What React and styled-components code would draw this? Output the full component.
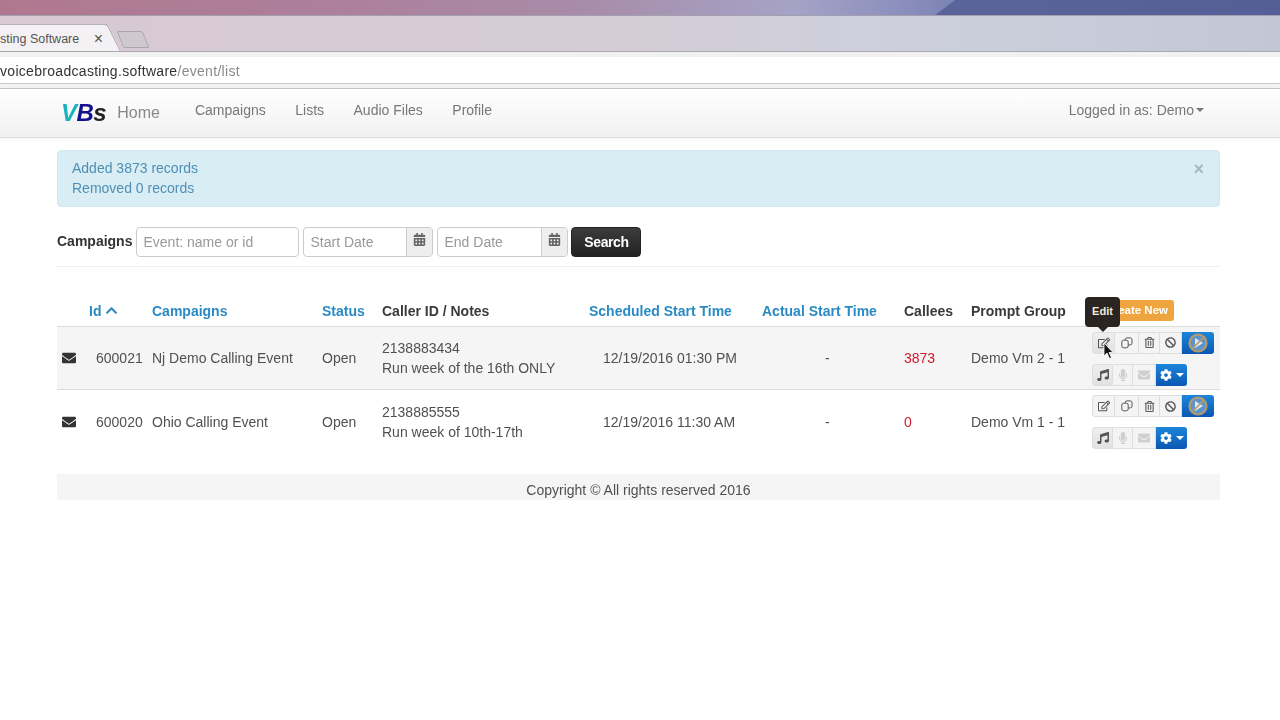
import React from "react";
import styled, { createGlobalStyle } from "styled-components";
import {
  FaBan,
  FaCalendarAlt,
  FaChevronUp,
  FaCog,
  FaEnvelope,
  FaMicrophone,
  FaMusic,
  FaRegEdit,
  FaRegTrashAlt,
} from "react-icons/fa";

const GlobalStyle = createGlobalStyle`
  html, body {
    margin: 0;
    padding: 0;
    height: 100%;
    background: #fff;
    overflow: hidden;
  }
  body {
    font-family: "Liberation Sans", Arial, sans-serif;
    font-size: 14px;
    color: #505050;
  }
`;

const Screen = styled.div`
  width: 1280px;
  height: 720px;
  overflow: hidden;
  position: relative;
  filter: blur(0.5px);
`;

const Desktop = styled.div`
  height: 16px;
  position: relative;
  background: linear-gradient(
    90deg,
    #b0788f 0%,
    #ad7f9b 25%,
    #a88ba8 45%,
    #a5a3c6 62%,
    #8d90bd 70%,
    #7d85b6 74%,
    #7d85b6 100%
  );
  border-bottom: 1px solid #a39fae;
  box-sizing: border-box;

  &::after {
    content: "";
    position: absolute;
    inset: 0;
    background: linear-gradient(90deg, #6a74a6 0%, #535f96 100%);
    clip-path: polygon(935px 100%, 955px 0, 100% 0, 100% 100%);
  }
`;

const TabStrip = styled.div`
  height: 36px;
  display: flex;
  align-items: flex-end;
  background: linear-gradient(90deg, #d8c9d3 0%, #d5ccd6 45%, #cdd0dc 70%, #c3c6d5 100%);
  border-bottom: 1px solid #a9a8ae;
  box-sizing: border-box;
`;

const Tab = styled.div`
  width: 107px;
  height: 27px;
  box-sizing: border-box;
  padding-top: 2px;
  display: flex;
  align-items: center;
  justify-content: space-between;
  position: relative;
  background: #f3f1f3;
  border-top: 1px solid #b5b1b6;
  font-size: 12.5px;
  color: #555;
  white-space: nowrap;

  &::after {
    content: "";
    position: absolute;
    top: -1px;
    right: -7px;
    bottom: 0;
    width: 14px;
    background: #f3f1f3;
    border-top: 1px solid #b5b1b6;
    border-right: 1px solid #a9a6ab;
    border-top-right-radius: 4px;
    transform: skewX(26deg);
  }
`;

const TabClose = styled.span`
  margin-right: 4px;
  font-size: 16px;
  color: #555;
  position: relative;
  z-index: 1;
`;

const NewTab = styled.div`
  width: 24px;
  height: 15px;
  margin: 0 0 3px 13px;
  background: #cfc9ce;
  border: 1px solid #aaa7ac;
  border-radius: 2px;
  transform: skewX(22deg);
`;

const UrlBar = styled.div`
  height: 32px;
  box-sizing: border-box;
  padding-top: 1px;
  background: #fff;
  border-top: 5px solid #f1f1f1;
  border-bottom: 1px solid #c8c8c8;
  display: flex;
  align-items: center;
  font-size: 14px;
  letter-spacing: 0.3px;
  color: #333;
`;

const UrlPath = styled.span`
  color: #8a8a8a;
`;

const UrlGap = styled.div`
  height: 5px;
  background: #f3f3f3;
  border-bottom: 1px solid #c8c8c8;
  box-sizing: border-box;
`;

const Navbar = styled.nav`
  height: 49px;
  box-sizing: border-box;
  display: flex;
  align-items: center;
  padding: 0 76px 6px 61px;
  background: linear-gradient(180deg, #ffffff 0%, #f1f1f1 100%);
  border-bottom: 1px solid #dcdcdc;
  box-shadow: 0 1px 5px rgba(0, 0, 0, 0.05);
  color: #777;
`;

const Logo = styled.span`
  font-size: 24px;
  font-weight: 700;
  font-style: italic;
  letter-spacing: -0.5px;
  color: #1bb3bb;
  margin-top: 5px;
`;

const LogoB = styled.span`
  color: #12128f;
`;

const LogoS = styled.span`
  color: #222;
`;

const Brand = styled.span`
  font-size: 16px;
  color: #888;
  margin: 6px 35px 0 11px;
`;

const NavLink = styled.a`
  color: #777;
  margin-right: 29.5px;
  font-size: 14px;
`;

const NavRight = styled.div`
  margin-left: auto;
  display: flex;
  align-items: center;
  gap: 2px;
  color: #777;
`;

const Caret = styled.span`
  display: inline-block;
  width: 0;
  height: 0;
  border-top: 4px solid ${(props) => props.color || "#777"};
  border-left: 4px solid transparent;
  border-right: 4px solid transparent;
`;

const Container = styled.main`
  margin: 0 60px 0 57px;
  padding-top: 12px;
`;

const Alert = styled.div`
  height: 57px;
  box-sizing: border-box;
  padding: 7px 14px;
  background: #d9edf4;
  border: 1px solid #cfe8f1;
  border-radius: 4px;
  color: #4f8fb5;
  line-height: 20px;
  display: flex;
  justify-content: space-between;
`;

const AlertClose = styled.span`
  font-size: 18px;
  font-weight: 700;
  color: #9fb8c4;
  line-height: 20px;
  margin: 1px 1px 0 0;
`;

const SearchForm = styled.form`
  display: flex;
  align-items: center;
  margin-top: 20px;
  padding-bottom: 9px;
  border-bottom: 1px solid #eee;
  height: 30px;
`;

const SearchLabel = styled.label`
  font-weight: 700;
  color: #333;
  margin-right: 4px;
  position: relative;
  top: -1px;
`;

const Field = styled.div`
  height: 30px;
  box-sizing: border-box;
  width: ${(props) => props.width}px;
  margin-right: ${(props) => props.gap || 4}px;
  display: flex;
  align-items: center;
  border: 1px solid #ccc;
  border-radius: 4px;
  overflow: hidden;
  background: #fff;
`;

const Placeholder = styled.span`
  flex: 1;
  padding-left: 6px;
  color: #999;
`;

const AddOn = styled.span`
  width: 26px;
  height: 100%;
  display: flex;
  align-items: center;
  justify-content: center;
  padding-bottom: 5px;
  box-sizing: border-box;
  background: #eee;
  border-left: 1px solid #ccc;
  color: #666;
  font-size: 13px;
`;

const SearchButton = styled.button`
  height: 30px;
  width: 70px;
  padding: 0;
  font: 700 14px "Liberation Sans", Arial, sans-serif;
  letter-spacing: -0.4px;
  color: #fff;
  background: linear-gradient(180deg, #3c3c3c 0%, #222 100%);
  border: 1px solid #222;
  border-radius: 4px;
`;

const columns = "32px 63px 170px 60px 207px 173px 142px 67px 120px 129px";

const HeaderRow = styled.div`
  display: grid;
  grid-template-columns: ${columns};
  align-items: center;
  height: 60px;
  box-sizing: border-box;
  padding-top: 28px;
  font-weight: 700;
  color: #3a3a3a;
  border-bottom: 1px solid #ddd;
  position: relative;
`;

const SortLink = styled.a`
  color: #2a8ac4;
  display: flex;
  align-items: center;
  gap: 4px;
`;

const CreateButton = styled.div`
  width: 89px;
  height: 21px;
  box-sizing: border-box;
  padding-right: 6px;
  background: #eea540;
  border-radius: 3px;
  color: #fff;
  font-size: 11.5px;
  font-weight: 700;
  line-height: 21px;
  text-align: right;
  margin-left: -6px;
  overflow: hidden;
`;

const Tooltip = styled.div`
  position: absolute;
  left: 1028px;
  top: 30px;
  width: 35px;
  height: 30px;
  box-sizing: border-box;
  background: #2a2521;
  border-radius: 4px;
  color: #f4eadd;
  font-size: 11px;
  font-weight: 700;
  line-height: 28px;
  text-align: center;

  &::after {
    content: "";
    position: absolute;
    left: 13px;
    bottom: -5px;
    border-top: 5px solid #2a2521;
    border-left: 5px solid transparent;
    border-right: 5px solid transparent;
  }
`;

const Row = styled.div`
  display: grid;
  grid-template-columns: ${columns};
  align-items: center;
  height: ${(props) => (props.$striped ? 63 : 64)}px;
  box-sizing: border-box;
  background: ${(props) => (props.$striped ? "#f5f5f5" : "#fff")};
  border-bottom: ${(props) => (props.$striped ? "1px solid #ddd" : "none")};
  line-height: 20px;
`;

const EnvelopeCell = styled.div`
  padding-left: 5px;
  display: flex;
  color: #333;
  font-size: 14px;
`;

const IdCell = styled.div`
  padding-left: 7px;
`;

const OffsetCell = styled.div`
  padding-left: ${(props) => props.pad || 0}px;
`;

const CalleeCount = styled.div`
  color: #d0182c;
`;

const Actions = styled.div`
  display: flex;
  flex-direction: column;
  align-items: flex-start;
  gap: 10px;
  padding-top: ${(props) => (props.$nudge ? 1 : 0)}px;
`;

const ButtonGroup = styled.div`
  display: flex;
  height: 22px;
  margin-left: 1px;
`;

const IconButton = styled.span`
  width: ${(props) => props.width}px;
  height: 22px;
  box-sizing: border-box;
  display: flex;
  align-items: center;
  justify-content: center;
  font-size: ${(props) => props.size || 11}px;
  color: ${(props) => (props.$muted ? "#cfcfcf" : "#555")};
  background: ${(props) =>
    props.$active
      ? "linear-gradient(180deg, #eeeeee 0%, #e2e2e2 100%)"
      : "#f4f4f4"};
  border: 1px solid #dedede;
  border-left-width: ${(props) => (props.$first ? 1 : 0)}px;
  border-radius: ${(props) => (props.$first ? "3px 0 0 3px" : "0")};
`;

const BlueButton = styled.span`
  width: ${(props) => props.width}px;
  height: 22px;
  box-sizing: border-box;
  display: flex;
  align-items: center;
  justify-content: center;
  gap: 4px;
  color: #fff;
  font-size: 12px;
  background: linear-gradient(180deg, #1c86da 0%, #0b57b3 100%);
  border-radius: 0 3px 3px 0;
`;

const Footer = styled.footer`
  margin-top: 20px;
  height: 26px;
  background: #f5f5f5;
  text-align: center;
  line-height: 33px;
  overflow: hidden;
`;

const Cursor = styled.svg`
  position: absolute;
  left: 1103px;
  top: 342px;
`;

function DuplicateIcon() {
  return (
    <svg width="12" height="12" viewBox="0 0 12 12" fill="none" stroke="#555" strokeWidth="1">
      <rect x="0.8" y="3.2" width="6.4" height="7.6" rx="1.8" />
      <path d="M4.2 3 V2.6 a1.7 1.7 0 0 1 1.7 -1.7 h3.4 a1.7 1.7 0 0 1 1.7 1.7 v3.6 a1.7 1.7 0 0 1 -1.7 1.7 H7.4" />
    </svg>
  );
}

function PlayBadge() {
  return (
    <svg width="22" height="22" viewBox="0 0 22 22">
      <circle cx="11" cy="11" r="8.5" fill="#5f94c8" stroke="#b59a6a" strokeWidth="2.2" />
      <path d="M8 6 L16 11 L8 16 Z" fill="#dfeaf5" />
      <path d="M5 17 L17 5" stroke="#b59a6a" strokeWidth="1.6" />
    </svg>
  );
}

function RowActions({ active }) {
  return (
    <Actions $nudge={active}>
      <ButtonGroup>
        <IconButton $first $active={active} width={23} size={12}>
          <FaRegEdit />
        </IconButton>
        <IconButton width={24}>
          <DuplicateIcon />
        </IconButton>
        <IconButton width={21}>
          <FaRegTrashAlt />
        </IconButton>
        <IconButton width={22}>
          <FaBan />
        </IconButton>
        <BlueButton width={32}>
          <PlayBadge />
        </BlueButton>
      </ButtonGroup>
      <ButtonGroup>
        <IconButton $first $active width={21} size={12}>
          <FaMusic />
        </IconButton>
        <IconButton $muted width={20} size={12}>
          <FaMicrophone />
        </IconButton>
        <IconButton $muted width={23} size={12}>
          <FaEnvelope />
        </IconButton>
        <BlueButton width={31}>
          <FaCog />
          <Caret color="#fff" />
        </BlueButton>
      </ButtonGroup>
    </Actions>
  );
}

const rows = [
  {
    id: "600021",
    name: "Nj Demo Calling Event",
    caller: "2138883434",
    notes: "Run week of the 16th ONLY",
    start: "12/19/2016 01:30 PM",
    callees: "3873",
    group: "Demo Vm 2 - 1",
    striped: true,
  },
  {
    id: "600020",
    name: "Ohio Calling Event",
    caller: "2138885555",
    notes: "Run week of 10th-17th",
    start: "12/19/2016 11:30 AM",
    callees: "0",
    group: "Demo Vm 1 - 1",
    striped: false,
  },
];

export default function App() {
  return (
    <Screen>
      <GlobalStyle />
      <Desktop />
      <TabStrip>
        <Tab>
          <span>sting Software</span>
          <TabClose>×</TabClose>
        </Tab>
        <NewTab />
      </TabStrip>
      <UrlBar>
        voicebroadcasting.software<UrlPath>/event/list</UrlPath>
      </UrlBar>
      <UrlGap />
      <Navbar>
        <Logo>
          V<LogoB>B</LogoB>
          <LogoS>s</LogoS>
        </Logo>
        <Brand>Home</Brand>
        <NavLink>Campaigns</NavLink>
        <NavLink>Lists</NavLink>
        <NavLink>Audio Files</NavLink>
        <NavLink>Profile</NavLink>
        <NavRight>
          Logged in as: Demo
          <Caret />
        </NavRight>
      </Navbar>
      <Container>
        <Alert>
          <div>
            Added 3873 records
            <br />
            Removed 0 records
          </div>
          <AlertClose>×</AlertClose>
        </Alert>
        <SearchForm>
          <SearchLabel>Campaigns</SearchLabel>
          <Field width={163}>
            <Placeholder>Event: name or id</Placeholder>
          </Field>
          <Field width={130}>
            <Placeholder>Start Date</Placeholder>
            <AddOn>
              <FaCalendarAlt />
            </AddOn>
          </Field>
          <Field width={131} gap={3}>
            <Placeholder>End Date</Placeholder>
            <AddOn>
              <FaCalendarAlt />
            </AddOn>
          </Field>
          <SearchButton type="button">Search</SearchButton>
        </SearchForm>
        <HeaderRow>
          <span />
          <SortLink>
            Id <FaChevronUp size={13} />
          </SortLink>
          <SortLink>Campaigns</SortLink>
          <SortLink>Status</SortLink>
          <span>Caller ID / Notes</span>
          <SortLink>Scheduled Start Time</SortLink>
          <SortLink>Actual Start Time</SortLink>
          <span>Callees</span>
          <span>Prompt Group</span>
          <CreateButton>reate New</CreateButton>
          <Tooltip>Edit</Tooltip>
        </HeaderRow>
        {rows.map((row) => (
          <Row key={row.id} $striped={row.striped}>
            <EnvelopeCell>
              <FaEnvelope />
            </EnvelopeCell>
            <IdCell>{row.id}</IdCell>
            <div>{row.name}</div>
            <div>Open</div>
            <div>
              {row.caller}
              <br />
              {row.notes}
            </div>
            <OffsetCell pad={14}>{row.start}</OffsetCell>
            <OffsetCell pad={63}>-</OffsetCell>
            <CalleeCount>{row.callees}</CalleeCount>
            <div>{row.group}</div>
            <RowActions active={row.striped} />
          </Row>
        ))}
        <Footer>Copyright © All rights reserved 2016</Footer>
      </Container>
      <Cursor width="12" height="18" viewBox="0 0 12 18">
        <path d="M1 1 L1 14 L4 11 L6.5 16.5 L8.5 15.5 L6 10.5 L10 10.5 Z" fill="#111" stroke="#fff" strokeWidth="0.8" />
      </Cursor>
    </Screen>
  );
}
